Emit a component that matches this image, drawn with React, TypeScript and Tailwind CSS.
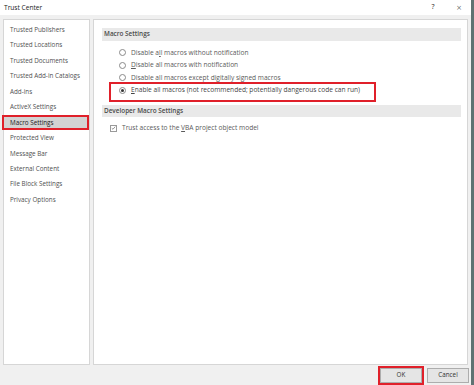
import React from "react";

const navItems = [
  "Trusted Publishers",
  "Trusted Locations",
  "Trusted Documents",
  "Trusted Add-in Catalogs",
  "Add-ins",
  "ActiveX Settings",
  "Macro Settings",
  "Protected View",
  "Message Bar",
  "External Content",
  "File Block Settings",
  "Privacy Options",
];

function Radio({ checked }: { checked?: boolean }) {
  return (
    <span className="w-[7px] h-[7px] rounded-full border border-[#8a8a8a] bg-white flex items-center justify-center shrink-0">
      {checked && <span className="w-[3px] h-[3px] rounded-full bg-[#333]" />}
    </span>
  );
}

function SectionHeader({ title }: { title: string }) {
  return (
    <div className="h-[12.5px] bg-[#e9e9e9] flex items-center pl-[2px] text-[6.4px] font-semibold text-[#4a4a4a]">
      {title}
    </div>
  );
}

export default function App() {
  return (
    <div
      className="w-[474px] h-[385px] flex bg-white overflow-hidden"
      style={{ fontFamily: '"Open Sans", "Liberation Sans", sans-serif' }}
    >
      <div className="flex-1 flex flex-col">
        {/* title bar */}
        <div className="h-[15px] bg-white flex items-center pl-[4px] pr-[7px] text-[6.6px] text-[#222]">
          <span className="flex-1">Trust Center</span>
          <span className="w-[10px] text-center mr-[16px] text-[7px]">?</span>
          <span className="w-[10px] text-center text-[9px] font-light">×</span>
        </div>

        {/* body */}
        <div className="flex-1 bg-[#f0f0f0] flex gap-[3px] pt-[4px] pl-[3px]">
          {/* nav */}
          <div className="w-[87px] h-[346px] bg-white border border-[#d6d6d6] pt-[2px] text-[6.3px] text-[#505050]">
            {navItems.map((item) => {
              const selected = item === "Macro Settings";
              return (
                <div key={item} className="h-[15.45px] flex items-center relative">
                  {selected ? (
                    <>
                      <div className="w-[84px] h-[13px] bg-[#d3d3d3] flex items-center pl-[6px] text-[#222]">
                        {item}
                      </div>
                      <div className="absolute left-[-2px] right-[0px] top-[0px] h-[15px] border-[2px] border-[#e0202a]" />
                    </>
                  ) : (
                    <span className="pl-[6px]">{item}</span>
                  )}
                </div>
              );
            })}
          </div>

          {/* content */}
          <div className="w-[375px] h-[346px] bg-white border border-[#d6d6d6] pt-[8px] pl-[8px] pr-[6px] text-[6.6px] text-[#5a5a5a]">
            <SectionHeader title="Macro Settings" />
            <div className="mt-[6px] pl-[17px]">
              <div className="h-[12.5px] flex items-center gap-[5px]">
                <Radio />
                <span>Disable a<u>l</u>l macros without notification</span>
              </div>
              <div className="h-[12.5px] flex items-center gap-[5px]">
                <Radio />
                <span><u>D</u>isable all macros with notification</span>
              </div>
              <div className="h-[12.5px] flex items-center gap-[5px]">
                <Radio />
                <span>Disable all macros except di<u>g</u>itally signed macros</span>
              </div>
              <div className="h-[12.5px] flex items-center gap-[5px] relative">
                <Radio checked />
                <span className="text-[#444]">
                  <u>E</u>nable all macros (not recommended; potentially dangerous code can run)
                </span>
                <div className="absolute left-[-10px] top-[-2px] w-[267px] h-[20px] border-[2px] border-[#e0202a]" />
              </div>
            </div>
            <div className="mt-[8px]">
              <SectionHeader title="Developer Macro Settings" />
            </div>
            <div className="mt-[5px] pl-[8px] h-[12px] flex items-center gap-[5px]">
              <span className="w-[7px] h-[7px] border border-[#9a9a9a] bg-white flex items-center justify-center shrink-0">
                <svg viewBox="0 0 8 8" className="w-[6px] h-[6px]">
                  <path d="M1.2 4.2 L3.1 6 L6.8 1.8" fill="none" stroke="#555" strokeWidth="1" />
                </svg>
              </span>
              <span>Trust access to the <u>V</u>BA project object model</span>
            </div>
          </div>
        </div>

        {/* footer */}
        <div className="h-[20px] bg-[#f0f0f0] flex items-center justify-end gap-[5px] pr-[2px]">
          <div className="relative">
            <button className="w-[42px] h-[15px] bg-[#e5e5e5] border border-[#adadad] text-[6.3px] text-[#333] flex items-center justify-center">
              OK
            </button>
            <div className="absolute left-[-2px] top-[-2px] w-[46px] h-[19px] border-[2px] border-[#e0202a]" />
          </div>
          <button className="w-[42px] h-[15px] bg-[#e5e5e5] border border-[#adadad] text-[6.3px] text-[#333] flex items-center justify-center">
            Cancel
          </button>
        </div>
      </div>
      <div className="w-[3px] bg-[#5f7272]" />
    </div>
  );
}
